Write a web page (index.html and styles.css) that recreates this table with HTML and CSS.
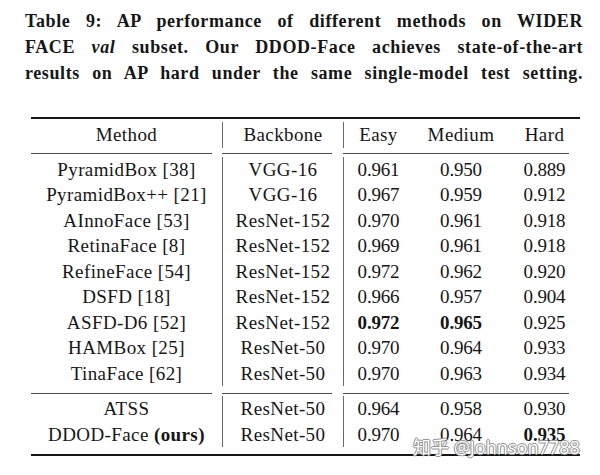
FILE: index.html
```html
<!DOCTYPE html>
<html>
<head>
<meta charset="utf-8">
<link rel="stylesheet" href="styles.css">
</head>
<body>
<div class="page">
  <p class="caption">Table 9: AP performance of different methods on WIDER<br>FACE <i>val</i> subset. Our DDOD-Face achieves state-of-the-art<br>results on AP hard under the same single-model test setting.</p>
  <div class="table">
    <div class="grid head">
      <div class="c">Method</div><div class="c vl">Backbone</div><div class="c vl">Easy</div><div class="c">Medium</div><div class="c">Hard</div>
    </div>
    <div class="grid rule"><div class="seg s1"></div><div class="seg s2"></div><div class="seg s3"></div></div>
    <div class="grid body1">
      <div class="c">PyramidBox [38]</div><div class="c vl">VGG-16</div><div class="c vl n">0.961</div><div class="c n">0.950</div><div class="c n">0.889</div>
      <div class="c">PyramidBox++ [21]</div><div class="c vl">VGG-16</div><div class="c vl n">0.967</div><div class="c n">0.959</div><div class="c n">0.912</div>
      <div class="c">AInnoFace [53]</div><div class="c vl">ResNet-152</div><div class="c vl n">0.970</div><div class="c n">0.961</div><div class="c n">0.918</div>
      <div class="c">RetinaFace [8]</div><div class="c vl">ResNet-152</div><div class="c vl n">0.969</div><div class="c n">0.961</div><div class="c n">0.918</div>
      <div class="c">RefineFace [54]</div><div class="c vl">ResNet-152</div><div class="c vl n">0.972</div><div class="c n">0.962</div><div class="c n">0.920</div>
      <div class="c">DSFD [18]</div><div class="c vl">ResNet-152</div><div class="c vl n">0.966</div><div class="c n">0.957</div><div class="c n">0.904</div>
      <div class="c">ASFD-D6 [52]</div><div class="c vl">ResNet-152</div><div class="c vl n"><b>0.972</b></div><div class="c n"><b>0.965</b></div><div class="c n">0.925</div>
      <div class="c">HAMBox [25]</div><div class="c vl">ResNet-50</div><div class="c vl n">0.970</div><div class="c n">0.964</div><div class="c n">0.933</div>
      <div class="c">TinaFace [62]</div><div class="c vl">ResNet-50</div><div class="c vl n">0.970</div><div class="c n">0.963</div><div class="c n">0.934</div>
    </div>
    <div class="grid rule"><div class="seg s1"></div><div class="seg s2"></div><div class="seg s3"></div></div>
    <div class="grid body2">
      <div class="c">ATSS</div><div class="c vl">ResNet-50</div><div class="c vl n">0.964</div><div class="c n">0.958</div><div class="c n">0.930</div>
      <div class="c">DDOD-Face <b>(ours)</b></div><div class="c vl">ResNet-50</div><div class="c vl n">0.970</div><div class="c n">0.964</div><div class="c n"><b>0.935</b></div>
    </div>
  </div>
  <div class="watermark">知乎 @Johnson7788</div>
</div>
</body>
</html>
```

FILE: styles.css
```css
html, body {
  margin: 0;
  padding: 0;
  background: #fff;
}
.page {
  position: relative;
  padding-top: 8px;
  width: 600px;
  height: 467px;
  color: #161616;
  font-family: "Liberation Serif", "Times New Roman", Tinos, Times, "DejaVu Serif", serif;
}
.caption {
  margin: 0 0 0 25px;
  width: 558px;
  font-family: "Liberation Serif", "Times New Roman", Tinos, Times, "DejaVu Serif", serif;
  font-weight: bold;
  font-size: 18px;
  line-height: 26px;
  letter-spacing: 0.6px;
  text-align: justify;
  text-align-last: justify;
}
.table {
  margin: 31px 0 0 31px;
  width: 549px;
  border-top: 2px solid #161616;
  border-bottom: 2px solid #161616;
  font-family: "Liberation Serif", "Times New Roman", Tinos, Times, "DejaVu Serif", serif;
  font-size: 19px;
  letter-spacing: 0.4px;
}
.grid {
  display: grid;
  grid-template-columns: 191px 121px 70px 96px 71px;
}
.c {
  line-height: 25.5px;
  text-align: center;
  white-space: nowrap;
}
.vl {
  border-left: 1px solid #6a6a6a;
}
.n {
  letter-spacing: -0.2px;
}
.head {
  padding: 3px 0 5px;
}
.body1 {
  padding: 3px 0 7px;
}
.body2 {
  padding: 2px 0 7px;
}
.rule {
  height: 1px;
}
.seg {
  background: #4a4a4a;
  height: 1px;
}
.s1 {
  grid-column: 1;
  margin-right: 10px;
}
.s2 {
  grid-column: 2;
  margin-right: 11px;
}
.s3 {
  grid-column: 3 / 6;
  margin-right: 11px;
}
.watermark {
  position: absolute;
  left: 413px;
  top: 436px;
  font-family: "Noto Sans", "Noto Sans CJK SC", sans-serif;
  font-size: 18px;
  line-height: 22px;
  color: #fff;
  text-shadow: 0 0 1px #777, 1px 0 0 #999, -1px 0 0 #999, 0 1px 0 #999, 0 -1px 0 #999;
  white-space: nowrap;
}
```
